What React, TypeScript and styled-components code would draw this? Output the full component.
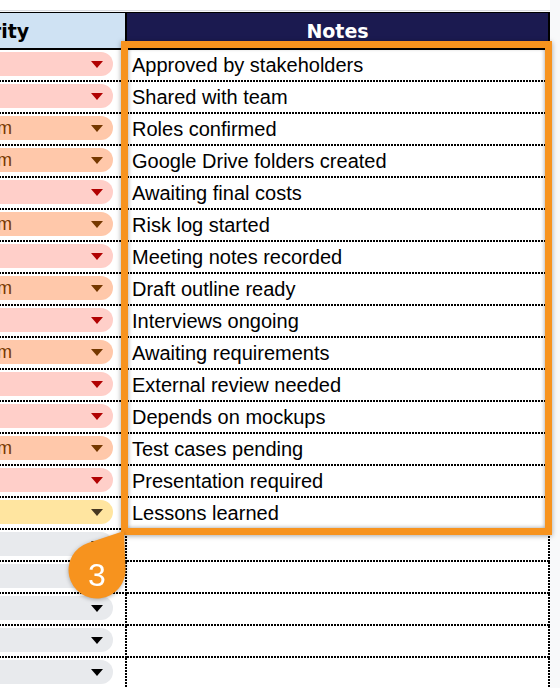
import styled, { createGlobalStyle, css } from "styled-components";

const GlobalStyle = createGlobalStyle`
  html, body {
    margin: 0;
    padding: 0;
    background: #f8f9fa;
    overflow: hidden;
  }
`;

const Page = styled.div`
  position: relative;
  width: 560px;
  height: 688px;
  overflow: hidden;
  background: #f8f9fa;
  font-family: "Liberation Sans", Arial, Helvetica, sans-serif;
`;

const TopStrip = styled.div`
  width: 550px;
  height: 10px;
  background: #fff;
  border-bottom: 1px solid #dadce0;
  margin-bottom: 1px;
`;

const Sheet = styled.div`
  display: grid;
  grid-template-columns: 197px 423px;
  margin-left: -70px;
  width: 620px;
`;

const HeaderCell = styled.div<{ $dark?: boolean }>`
  height: 35px;
  border-top: 1px solid #000;
  border-bottom: 2px solid #000;
  border-right: 2px solid #000;
  display: flex;
  align-items: center;
  font-family: "DejaVu Sans", Verdana, sans-serif;
  font-weight: bold;
  font-size: 19px;
  background: ${({ $dark }) => ($dark ? "#1b1a50" : "#cfe2f3")};
  color: ${({ $dark }) => ($dark ? "#fff" : "#000")};
  justify-content: ${({ $dark }) => ($dark ? "center" : "flex-start")};
  padding-left: ${({ $dark }) => ($dark ? "0" : "19px")};
`;

const dotted = css`
  background:
    linear-gradient(to right, #000 2px, transparent 2px) left bottom / 3px 2px repeat-x,
    linear-gradient(to bottom, #000 2px, transparent 2px) right top / 2px 3px repeat-y,
    #fff;
`;

const PriorityCell = styled.div`
  ${dotted};
  height: 32px;
  box-sizing: border-box;
  padding: 2px 14px 0 8px;
  display: flex;
  align-items: flex-start;
`;

const NoteCell = styled.div`
  ${dotted};
  height: 32px;
  box-sizing: border-box;
  padding: 0 0 2px 5px;
  display: flex;
  align-items: center;
  font-size: 20px;
  color: #000;
  white-space: nowrap;
`;

type Level = "High" | "Medium" | "Low" | "";

const tones: Record<string, { bg: string; fg: string }> = {
  High: { bg: "#ffcfc9", fg: "#b10202" },
  Medium: { bg: "#ffc8aa", fg: "#753800" },
  Low: { bg: "#ffe5a0", fg: "#473821" },
  "": { bg: "#e8eaed", fg: "#000" },
};

const Pill = styled.div<{ $level: Level }>`
  flex: 1;
  height: 24px;
  border-radius: 12px;
  padding: 0 10px;
  display: flex;
  align-items: center;
  font-size: 18px;
  background: ${({ $level }) => tones[$level].bg};
  color: ${({ $level }) => tones[$level].fg};
`;

const Caret = styled.span<{ $level: Level }>`
  margin-left: auto;
  width: 0;
  height: 0;
  border-left: 6px solid transparent;
  border-right: 6px solid transparent;
  border-top: 7px solid ${({ $level }) => tones[$level].fg};
`;

const Highlight = styled.div`
  position: absolute;
  left: 121px;
  top: 41px;
  width: 417px;
  height: 480px;
  border: 7px solid #f7931e;
  box-shadow: 0 1px 5px rgba(0, 0, 0, 0.35), inset 0 0 4px rgba(0, 0, 0, 0.4);
  pointer-events: none;
`;

const Badge = styled.div`
  position: absolute;
  left: 67px;
  top: 529px;
  width: 60px;
  height: 72px;
  filter: drop-shadow(0 1px 2px rgba(0, 0, 0, 0.3));

  svg {
    position: absolute;
    inset: 0;
  }
`;

const Digit = styled.span`
  position: absolute;
  left: 0;
  top: 30px;
  width: 60px;
  text-align: center;
  font-size: 32px;
  line-height: 32px;
  color: #fff;
`;

const rows: [Level, string][] = [
  ["High", "Approved by stakeholders"],
  ["High", "Shared with team"],
  ["Medium", "Roles confirmed"],
  ["Medium", "Google Drive folders created"],
  ["High", "Awaiting final costs"],
  ["Medium", "Risk log started"],
  ["High", "Meeting notes recorded"],
  ["Medium", "Draft outline ready"],
  ["High", "Interviews ongoing"],
  ["Medium", "Awaiting requirements"],
  ["High", "External review needed"],
  ["High", "Depends on mockups"],
  ["Medium", "Test cases pending"],
  ["High", "Presentation required"],
  ["Low", "Lessons learned"],
  ["", ""],
  ["", ""],
  ["", ""],
  ["", ""],
  ["", ""],
];

export default function App() {
  return (
    <Page>
      <GlobalStyle />
      <TopStrip />
      <Sheet>
        <HeaderCell>Priority</HeaderCell>
        <HeaderCell $dark>Notes</HeaderCell>
        {rows.map(([level, note], i) => (
          <>
            <PriorityCell key={`p${i}`}>
              <Pill $level={level}>
                {level}
                <Caret $level={level} />
              </Pill>
            </PriorityCell>
            <NoteCell key={`n${i}`}>{note}</NoteCell>
          </>
        ))}
      </Sheet>

      <Highlight />

      <Badge>
        <svg width="60" height="72" viewBox="0 0 60 72">
          <path d="M57 2 L58.5 39.9 A28.5 28.5 0 1 1 21.05 13.94 Z" fill="#f7931e" />
        </svg>
        <Digit>3</Digit>
      </Badge>
    </Page>
  );
}
